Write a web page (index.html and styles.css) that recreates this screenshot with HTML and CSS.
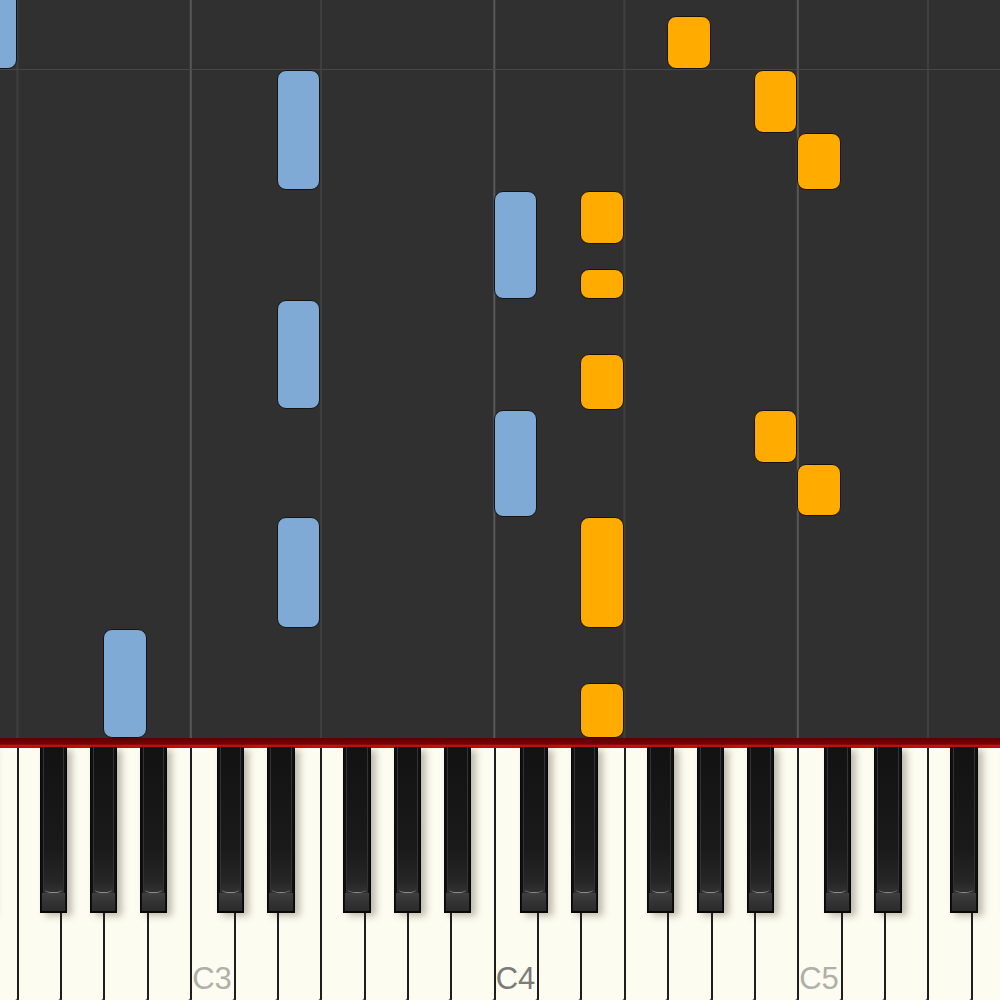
FILE: index.html
```html
<!DOCTYPE html>
<html lang="en">
<head>
  <meta charset="UTF-8">
  <meta name="viewport" content="width=device-width, initial-scale=1.0">
  <title>Piano Roll</title>
  <link rel="stylesheet" href="styles.css">
</head>
<body>
  <div class="screen">

    <!-- falling notes -->
    <div class="roll">
      <div class="note blue e2" style="top:-60px;height:129px"></div>
      <div class="note blue e3" style="top:70px;height:120px"></div>
      <div class="note blue c4" style="top:191px;height:108px"></div>
      <div class="note blue e3" style="top:300px;height:109px"></div>
      <div class="note blue c4" style="top:410px;height:107px"></div>
      <div class="note blue e3" style="top:517px;height:111px"></div>
      <div class="note blue a2" style="top:629px;height:109px"></div>

      <div class="note orange g4" style="top:16px;height:53px"></div>
      <div class="note orange b4" style="top:70px;height:63px"></div>
      <div class="note orange c5" style="top:133px;height:57px"></div>
      <div class="note orange e4" style="top:191px;height:53px"></div>
      <div class="note orange e4" style="top:269px;height:30px"></div>
      <div class="note orange e4" style="top:354px;height:56px"></div>
      <div class="note orange b4" style="top:410px;height:53px"></div>
      <div class="note orange c5" style="top:464px;height:52px"></div>
      <div class="note orange e4" style="top:517px;height:111px"></div>
      <div class="note orange e4" style="top:683px;height:55px"></div>
    </div>

    <div class="rail"></div>

    <!-- keyboard, starts at C2 (off screen on the left) -->
    <div class="keyboard">
      <div class="octave">
        <div class="white"></div><div class="white"></div><div class="white"></div>
        <div class="white"></div><div class="white"></div><div class="white"></div><div class="white"></div>
        <div class="black cs"></div><div class="black ds"></div>
        <div class="black fs"></div><div class="black gs"></div><div class="black as"></div>
      </div>
      <div class="octave">
        <div class="white"><span class="label">C3</span></div><div class="white"></div><div class="white"></div>
        <div class="white"></div><div class="white"></div><div class="white"></div><div class="white"></div>
        <div class="black cs"></div><div class="black ds"></div>
        <div class="black fs"></div><div class="black gs"></div><div class="black as"></div>
      </div>
      <div class="octave">
        <div class="white"><span class="label mid">C4</span></div><div class="white"></div><div class="white"></div>
        <div class="white"></div><div class="white"></div><div class="white"></div><div class="white"></div>
        <div class="black cs"></div><div class="black ds"></div>
        <div class="black fs"></div><div class="black gs"></div><div class="black as"></div>
      </div>
      <div class="octave">
        <div class="white"><span class="label">C5</span></div><div class="white"></div><div class="white"></div>
        <div class="white"></div><div class="white"></div><div class="white"></div><div class="white"></div>
        <div class="black cs"></div><div class="black ds"></div>
        <div class="black fs"></div><div class="black gs"></div><div class="black as"></div>
      </div>
    </div>

  </div>
</body>
</html>
```

FILE: styles.css
```css
/* piano roll */
body {
  margin: 0;
  padding: 0;
  background-color: #303030;
  font-family: "Liberation Sans", Arial, sans-serif;
  overflow: hidden;
}

.screen {
  width: 1000px;
  height: 1000px;
  overflow: hidden;
  display: flex;
  flex-direction: column;
}

/* grid: C lines brighter, F lines dimmer, one bar line */
.roll {
  position: relative;
  flex: none;
  height: 738px;
  background:
    linear-gradient(#474747, #474747) 0 69px / 100% 1px no-repeat,
    linear-gradient(90deg, #575757 0 1.5px, transparent 1.5px) 189.8px 0 / 303.52px 100% repeat-x,
    linear-gradient(90deg, #3f3f3f 0 1.5px, transparent 1.5px) 16.4px 0 / 303.52px 100% repeat-x,
    #303030;
}

.note {
  position: absolute;
  width: 43.8px;
  box-sizing: border-box;
  border: 1.8px solid #161412;
  border-radius: 9px;
}

.blue {
  background-color: #7eaad5;
}

.orange {
  background-color: #ffab00;
}

/* note columns = white key left edges */
.e2 { left: -26.8px; }
.a2 { left: 103.3px; }
.e3 { left: 276.7px; }
.c4 { left: 493.5px; }
.e4 { left: 580.2px; }
.g4 { left: 666.9px; }
.b4 { left: 753.6px; }
.c5 { left: 797px; }

.rail {
  flex: none;
  height: 10px;
  background: linear-gradient(#5e0000 0, #740404 6px, #c21212 7.5px, #b80c0c 10px);
}

.keyboard {
  flex: none;
  height: 252px;
  display: flex;
  margin-left: -113.32px;
}

.octave {
  position: relative;
  flex: none;
  width: 303.52px;
  display: flex;
}

.white {
  flex: 1;
  box-sizing: border-box;
  border-left: 2px solid #1e1e1e;
  background-color: #fdfcf0;
  border-radius: 0 0 2px 2px;
  display: flex;
  align-items: flex-end;
  padding-bottom: 6px;
}

.label {
  font-size: 31px;
  line-height: 31px;
  color: #b0b0ab;
}

.label.mid {
  color: #7b7b78;
}

.black {
  position: absolute;
  top: -1px;
  width: 27.3px;
  height: 166px;
  box-sizing: border-box;
  border: 1px solid #070707;
  border-top: none;
  border-bottom-width: 2px;
  background: linear-gradient(#121212 0, #1a1a1a 62%, #262626 82%, #2f2f2f 87%);
  box-shadow:
    inset 2px 0 #101010,
    inset 3px 0 #333,
    inset -2px 0 #101010,
    inset -3px 0 #333,
    5px 3px 7px rgba(40, 40, 20, 0.3);
}

/* highlight above the lip */
.black::before {
  content: "";
  position: absolute;
  left: 4px;
  right: 4px;
  bottom: 18px;
  height: 3px;
  border-bottom: 1px solid #8c8c8c;
  border-radius: 0 0 50% 50% / 0 0 3px 3px;
}

/* front lip of the key */
.black::after {
  content: "";
  position: absolute;
  left: 1px;
  right: 1px;
  bottom: 0;
  height: 18px;
  background: linear-gradient(#404040, #333 50%, #2b2b2b);
}

.cs { left: 26.5px; }
.ds { left: 77.2px; }
.fs { left: 153.2px; }
.gs { left: 203.3px; }
.as { left: 253.3px; }
```
